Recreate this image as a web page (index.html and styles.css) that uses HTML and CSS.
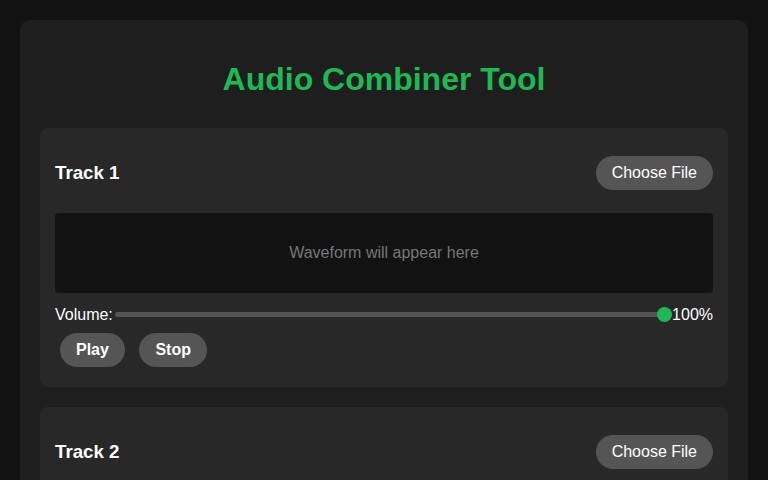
FILE: index.html
```html
<!DOCTYPE html>
<html lang="en">
<head>
<meta charset="utf-8">
<title>Audio Combiner Tool</title>
<link rel="stylesheet" href="styles.css">
</head>
<body>
<div class="container">
  <h1 class="title">Audio Combiner Tool</h1>

  <div class="track">
    <div class="track-header">
      <h3 class="track-name">Track 1</h3>
      <label class="file-btn">Choose File</label>
    </div>
    <div class="waveform">Waveform will appear here</div>
    <div class="volume-row">
      <span class="vol-label">Volume:</span>
      <input class="slider" type="range" min="0" max="100" value="100">
      <span class="vol-value">100%</span>
    </div>
    <div class="buttons">
      <button class="btn">Play</button>
      <button class="btn">Stop</button>
    </div>
  </div>

  <div class="track">
    <div class="track-header">
      <h3 class="track-name">Track 2</h3>
      <label class="file-btn">Choose File</label>
    </div>
    <div class="waveform">Waveform will appear here</div>
    <div class="volume-row">
      <span class="vol-label">Volume:</span>
      <input class="slider" type="range" min="0" max="100" value="100">
      <span class="vol-value">100%</span>
    </div>
    <div class="buttons">
      <button class="btn">Play</button>
      <button class="btn">Stop</button>
    </div>
  </div>
</div>
</body>
</html>
```

FILE: styles.css
```css
html, body {
  margin: 0;
  background: #121212;
}
body {
  padding: 20px;
  font-family: "Liberation Sans", Arial, sans-serif;
  color: #ffffff;
  font-size: 16px;
}
.container {
  background: #1e1e1e;
  border-radius: 10px;
  padding: 20px;
}
.title {
  color: #1db954;
  text-align: center;
  font-size: 32px;
  margin: 21px 0 30px;
  line-height: 37px;
}
.track {
  background: #282828;
  border-radius: 8px;
  padding: 15px;
  margin-bottom: 20px;
}
.track-header {
  display: flex;
  justify-content: space-between;
  align-items: center;
}
.track-name {
  font-size: 18.72px;
  margin: 18.72px 0;
  line-height: 21.5px;
}
.file-btn {
  background: #555555;
  color: #ffffff;
  border-radius: 20px;
  padding: 0 16px;
  height: 34px;
  line-height: 34px;
  font-size: 16px;
  margin-top: 1px;
}
.waveform {
  background: #121212;
  border-radius: 4px;
  height: 80px;
  margin: 11px 0 11px;
  display: flex;
  align-items: center;
  justify-content: center;
  color: #777777;
}
.volume-row {
  display: flex;
  align-items: center;
  height: 22px;
}
.slider {
  -webkit-appearance: none;
  appearance: none;
  flex: 1;
  margin: 0 0 0 2px;
  height: 5px;
  background: #555555;
  border-radius: 3px;
  outline: none;
}
.slider::-webkit-slider-thumb {
  -webkit-appearance: none;
  appearance: none;
  width: 15px;
  height: 15px;
  border-radius: 50%;
  background: #1db954;
  border: none;
}
.buttons {
  margin-top: 2px;
}
.btn {
  background: #555555;
  color: #ffffff;
  border: none;
  border-radius: 20px;
  padding: 0 16px;
  height: 34px;
  font-family: "Liberation Sans", Arial, sans-serif;
  font-size: 16px;
  font-weight: bold;
  margin: 5px;
}
```
